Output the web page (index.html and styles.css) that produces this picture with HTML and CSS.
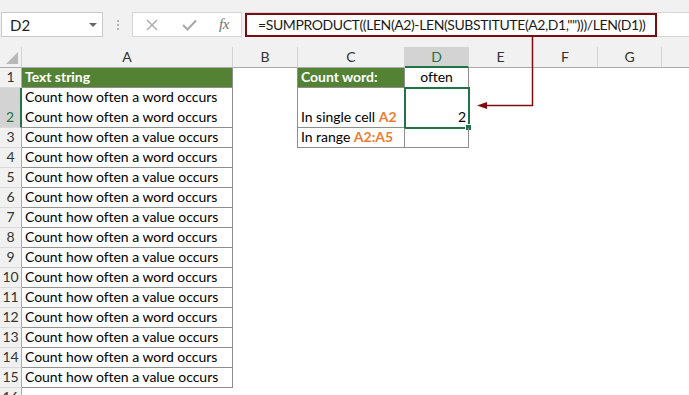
FILE: index.html
```html
<!DOCTYPE html>
<html>
<head>
<meta charset="utf-8">
<link rel="stylesheet" href="styles.css">
</head>
<body>
<div class="toolbar">
  <div class="namebox"><span class="nb-text">D2</span><span class="nb-arrow"></span></div>
  <div class="dots"><i></i><i></i><i></i></div>
  <div class="fxbox">
    <svg class="ico-x" width="12" height="12" viewBox="0 0 12 12"><path d="M1 1 L11 11 M11 1 L1 11" stroke="#a8a8a8" stroke-width="1.4" fill="none"/></svg>
    <svg class="ico-check" width="15" height="12" viewBox="0 0 15 12"><path d="M1 6 L5.5 10.5 L14 1.5" stroke="#a8a8a8" stroke-width="2" fill="none"/></svg>
    <span class="ico-fx">fx</span>
  </div>
  <div class="formula"><span class="formula-text">=SUMPRODUCT((LEN(A2)-LEN(SUBSTITUTE(A2,D1,"")))/LEN(D1))</span></div>
</div>

<div class="sheet">
  <!-- header row -->
  <div class="corner"><svg width="12" height="12" viewBox="0 0 12 12"><path d="M12 0 L12 12 L0 12 Z" fill="#b8b8b8"/></svg></div>
  <div class="ch">A</div><div class="ch">B</div><div class="ch">C</div><div class="ch sel-col">D</div><div class="ch">E</div><div class="ch">F</div><div class="ch">G</div><div class="ch last"></div>

  <!-- row 1 -->
  <div class="rh">1</div>
  <div class="c a bd green bold">Text string</div>
  <div class="c b bd-r"></div>
  <div class="c bd green bold">Count word:</div>
  <div class="c bd center">often</div>
  <div class="c"></div><div class="c"></div><div class="c"></div><div class="c"></div>

  <!-- row 2 -->
  <div class="rh sel-row">2</div>
  <div class="c a bd">Count how often a word occurs<br>Count how often a word occurs</div>
  <div class="c b bd-r"></div>
  <div class="c bd">In single cell&nbsp;<b class="ref">A2</b></div>
  <div class="c bd right selected">2<span class="handle"></span></div>
  <div class="c"></div><div class="c"></div><div class="c"></div><div class="c"></div>

  <!-- row 3 -->
  <div class="rh">3</div>
  <div class="c a bd">Count how often a value occurs</div>
  <div class="c b bd-r"></div>
  <div class="c bd">In range&nbsp;<b class="ref">A2:A5</b></div>
  <div class="c bd"></div>
  <div class="c"></div><div class="c"></div><div class="c"></div><div class="c"></div>

  <div class="rh">4</div><div class="c a bd">Count how often a word occurs</div><div class="c"></div><div class="c"></div><div class="c"></div><div class="c"></div><div class="c"></div><div class="c"></div><div class="c"></div>
  <div class="rh">5</div><div class="c a bd">Count how often a value occurs</div><div class="c"></div><div class="c"></div><div class="c"></div><div class="c"></div><div class="c"></div><div class="c"></div><div class="c"></div>
  <div class="rh">6</div><div class="c a bd">Count how often a word occurs</div><div class="c"></div><div class="c"></div><div class="c"></div><div class="c"></div><div class="c"></div><div class="c"></div><div class="c"></div>
  <div class="rh">7</div><div class="c a bd">Count how often a value occurs</div><div class="c"></div><div class="c"></div><div class="c"></div><div class="c"></div><div class="c"></div><div class="c"></div><div class="c"></div>
  <div class="rh">8</div><div class="c a bd">Count how often a word occurs</div><div class="c"></div><div class="c"></div><div class="c"></div><div class="c"></div><div class="c"></div><div class="c"></div><div class="c"></div>
  <div class="rh">9</div><div class="c a bd">Count how often a value occurs</div><div class="c"></div><div class="c"></div><div class="c"></div><div class="c"></div><div class="c"></div><div class="c"></div><div class="c"></div>
  <div class="rh">10</div><div class="c a bd">Count how often a word occurs</div><div class="c"></div><div class="c"></div><div class="c"></div><div class="c"></div><div class="c"></div><div class="c"></div><div class="c"></div>
  <div class="rh">11</div><div class="c a bd">Count how often a value occurs</div><div class="c"></div><div class="c"></div><div class="c"></div><div class="c"></div><div class="c"></div><div class="c"></div><div class="c"></div>
  <div class="rh">12</div><div class="c a bd">Count how often a word occurs</div><div class="c"></div><div class="c"></div><div class="c"></div><div class="c"></div><div class="c"></div><div class="c"></div><div class="c"></div>
  <div class="rh">13</div><div class="c a bd">Count how often a value occurs</div><div class="c"></div><div class="c"></div><div class="c"></div><div class="c"></div><div class="c"></div><div class="c"></div><div class="c"></div>
  <div class="rh">14</div><div class="c a bd">Count how often a word occurs</div><div class="c"></div><div class="c"></div><div class="c"></div><div class="c"></div><div class="c"></div><div class="c"></div><div class="c"></div>
  <div class="rh">15</div><div class="c a bd">Count how often a value occurs</div><div class="c"></div><div class="c"></div><div class="c"></div><div class="c"></div><div class="c"></div><div class="c"></div><div class="c"></div>
  <div class="rh">16</div><div class="c"></div><div class="c"></div><div class="c"></div><div class="c"></div><div class="c"></div><div class="c"></div><div class="c"></div><div class="c"></div>
</div>

<svg class="callout" width="689" height="395" viewBox="0 0 689 395">
  <path d="M532.5 36 V105.5 H485" stroke="#7f0f0f" stroke-width="1.5" fill="none"/>
  <path d="M477 105.5 L487 102 L487 109 Z" fill="#7f0f0f"/>
</svg>
</body>
</html>
```

FILE: styles.css
```css
html, body {
  margin: 0;
  padding: 0;
}
body {
  width: 689px;
  height: 395px;
  overflow: hidden;
  position: relative;
  background: #ffffff;
  font-family: Lato, "Liberation Sans", sans-serif;
  font-size: 14px;
  color: #000;
}

/* ---------- toolbar ---------- */
.toolbar {
  height: 47px;
  box-sizing: border-box;
  padding-top: 12px;
  background: #f1f1f1;
  display: flex;
  align-items: flex-start;
}
.namebox {
  margin-left: 1px;
  width: 102px;
  height: 25px;
  box-sizing: border-box;
  background: #fff;
  border: 1px solid #c9c9c9;
  display: flex;
  align-items: center;
  justify-content: space-between;
  padding: 0 5px 0 8px;
  font-size: 15px;
  color: #222;
}
.nb-arrow {
  width: 0;
  height: 0;
  border-left: 4px solid transparent;
  border-right: 4px solid transparent;
  border-top: 4px solid #666;
}
.dots {
  margin-left: 13px;
  width: 4px;
  height: 25px;
  display: flex;
  flex-direction: column;
  align-items: center;
  justify-content: center;
  gap: 2px;
}
.dots i {
  display: block;
  width: 2px;
  height: 2px;
  background: #b4b4b4;
}
.fxbox {
  margin-left: 12px;
  width: 110px;
  height: 25px;
  box-sizing: border-box;
  background: #fff;
  border: 1px solid #d6d6d6;
  display: flex;
  align-items: center;
  padding-left: 13px;
}
.ico-x { margin-right: 24px; }
.ico-check { margin-right: 22px; }
.ico-fx {
  font-family: "Liberation Serif", serif;
  font-style: italic;
  font-size: 15px;
  color: #707070;
  letter-spacing: -0.5px;
}
.formula {
  margin-left: 3px;
  flex: 1;
  height: 25px;
  box-sizing: border-box;
  background: #fff;
  border-top: 1px solid #d6d6d6;
  border-bottom: 1px solid #d6d6d6;
}
.formula-text {
  display: inline-block;
  box-sizing: border-box;
  width: 412px;
  height: 24px;
  border: 2px solid #7a0d0d;
  padding-left: 11px;
  line-height: 20px;
  font-size: 14px;
  letter-spacing: -0.4px;
  color: #1a1a1a;
  white-space: nowrap;
}

/* ---------- sheet ---------- */
.sheet {
  display: grid;
  grid-template-columns: 22px 211px 65px 107px 64px 64px 65px 64px 1fr;
  grid-template-rows: 21px 20px 40px repeat(14, 20px);
}
.corner {
  background: #f1f1f1;
  border-right: 1px solid #d4d4d4;
  border-bottom: 1px solid #ababab;
  display: flex;
  align-items: flex-end;
  justify-content: flex-end;
  padding: 0 3px 3px 0;
}
.ch {
  background: #f1f1f1;
  border-right: 1px solid #d4d4d4;
  border-bottom: 1px solid #ababab;
  text-align: center;
  line-height: 20px;
  color: #333;
  font-size: 14px;
}
.ch.last { border-right: 0; }
.ch.sel-col {
  background: #d3d3d3;
  color: #217346;
  border-bottom: 2px solid #217346;
  line-height: 19px;
}
.rh {
  background: #f1f1f1;
  border-right: 1px solid #ababab;
  border-bottom: 1px solid #dadada;
  display: flex;
  align-items: flex-end;
  justify-content: center;
  line-height: 20px;
  color: #333;
  font-size: 14px;
}
.rh.sel-row {
  background: #d3d3d3;
  color: #217346;
  border-right: 2px solid #217346;
}

.c {
  position: relative;
  display: flex;
  align-items: flex-end;
  padding: 0 3px;
  line-height: 20px;
  white-space: nowrap;
  letter-spacing: -0.03px;
}
.c.a {
  flex-direction: column;
  justify-content: flex-end;
  align-items: flex-start;
}
.bd {
  border-right: 1px solid #8e8e8e;
  border-bottom: 1px solid #8e8e8e;
}
.bd-r {
  border-right: 1px solid #8e8e8e;
}
.green {
  background: #548235;
  color: #fff;
}
.bold { font-weight: 700; }
.center { justify-content: center; }
.right { justify-content: flex-end; }
.ref {
  color: #ed7d31;
  font-weight: 700;
}
.selected {
  outline: 2px solid #217346;
  outline-offset: -1px;
  padding-right: 2px;
}
.handle {
  position: absolute;
  right: -4px;
  bottom: -4px;
  width: 5px;
  height: 5px;
  background: #217346;
  border: 1px solid #fff;
}

.callout {
  position: absolute;
  left: 0;
  top: 0;
  pointer-events: none;
}
```
